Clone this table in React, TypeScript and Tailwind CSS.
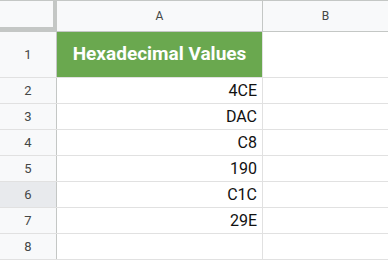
import React from 'react';

const values = ['4CE', 'DAC', 'C8', '190', 'C1C', '29E', ''];

const App: React.FC = () => {
  return (
    <div
      className="w-[388px] h-[260px] overflow-hidden bg-white border-t border-[#c4c7c5]"
      style={{ fontFamily: 'Roboto, "Liberation Sans", sans-serif' }}
    >
      {/* column headers */}
      <div className="flex h-[31px] border-b border-[#c4c7c5] bg-[#f8f9fa]">
        <div className="w-[57px] h-[30px] shrink-0 bg-[#f8f9fa] border-r-4 border-b-4 border-[#c4c7c5]" />
        <div className="w-[206px] shrink-0 flex items-center justify-center border-r border-[#c4c7c5] text-[12px] text-[#444746]">
          A
        </div>
        <div className="flex-1 flex items-center justify-center text-[12px] text-[#444746]">B</div>
      </div>

      {/* row 1 */}
      <div className="flex h-[46px] border-b border-[#e1e1e1]">
        <div className="w-[57px] shrink-0 flex items-center justify-center bg-[#f8f9fa] border-r border-[#c4c7c5] text-[13px] text-[#444746]">
          1
        </div>
        <div className="w-[206px] shrink-0 flex items-center justify-center bg-[#6aa84f] border-r border-[#e1e1e1] text-white font-bold text-[19px]">
          Hexadecimal Values
        </div>
        <div className="flex-1" />
      </div>

      {values.map((v, i) => (
        <div key={i} className="flex h-[26px] border-b border-[#e1e1e1]">
          <div
            className={`w-[57px] shrink-0 flex items-center justify-center border-r border-[#c4c7c5] text-[13px] text-[#444746] ${
              i === 4 ? 'bg-[#e8eaed]' : 'bg-[#f8f9fa]'
            }`}
          >
            {i + 2}
          </div>
          <div className="w-[206px] shrink-0 flex items-center justify-end pr-[5px] border-r border-[#e1e1e1] text-[16px] text-[#111111]">
            {v}
          </div>
          <div className="flex-1" />
        </div>
      ))}
    </div>
  );
};

export default App;
